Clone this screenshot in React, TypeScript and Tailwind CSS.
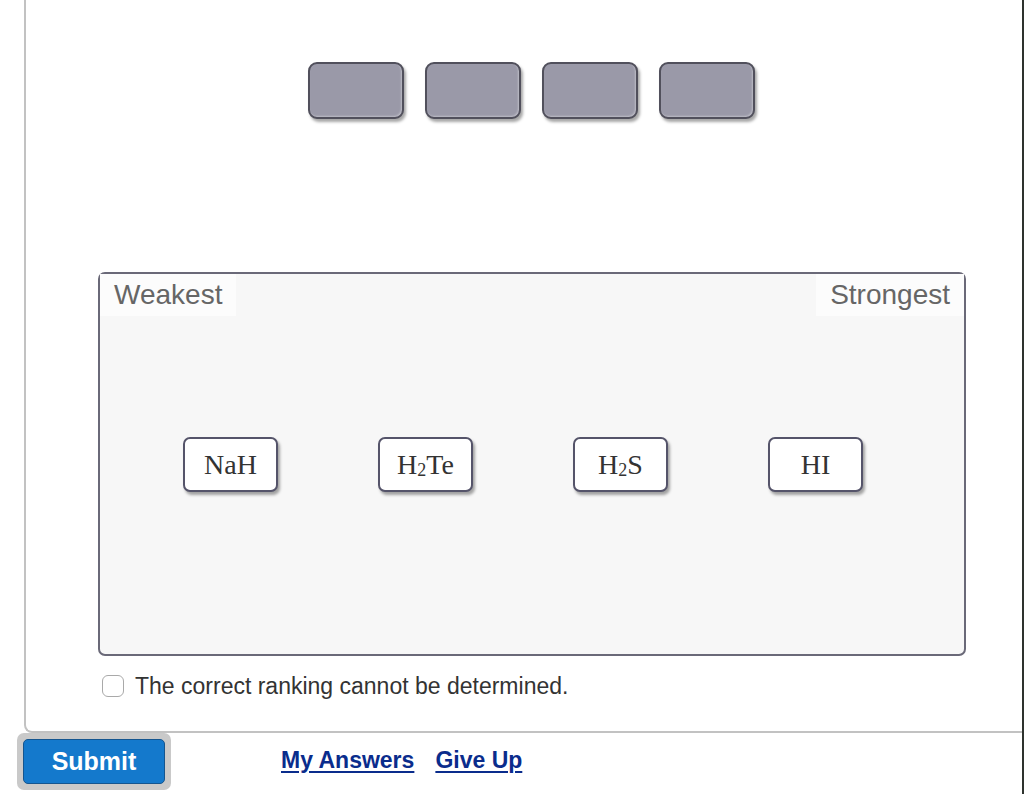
import React from 'react';

const Slot: React.FC = () => (
  <div className="w-[96px] h-[57px] rounded-[9px] border-[2.5px] border-[#51505c] bg-[#9a99a8] shadow-[2px_3px_3px_rgba(0,0,0,0.35),inset_-1px_-1px_2px_rgba(255,255,255,0.35)]" />
);

const Item: React.FC<{ children: React.ReactNode }> = ({ children }) => (
  <div
    className="w-[95px] h-[55px] rounded-[7px] border-[2.5px] border-[#55546a] bg-white flex items-center justify-center text-[28px] text-[#333] shadow-[2px_3px_3px_rgba(0,0,0,0.35)]"
    style={{ fontFamily: '"Liberation Serif", serif' }}
  >
    {children}
  </div>
);

const Sub: React.FC<{ children: React.ReactNode }> = ({ children }) => (
  <span className="text-[18px] relative top-[6px]">{children}</span>
);

export default function App() {
  return (
    <div
      className="w-[1024px] h-[794px] bg-white flex overflow-hidden"
      style={{ fontFamily: '"Liberation Sans", Arial, sans-serif' }}
    >
      <div className="flex-1 flex flex-col">
        <div className="ml-[24px] h-[733px] border-l-2 border-b-2 border-[#c2c2c2] rounded-bl-[8px] flex flex-col">
          <div className="ml-[71px] w-[868px] pt-[62px] flex justify-center gap-[21px]">
            <Slot />
            <Slot />
            <Slot />
            <Slot />
          </div>

          <div className="ml-[72px] mt-[153px] w-[868px] h-[384px] rounded-[7px] border-2 border-[#6a6978] bg-[#f7f7f7] flex flex-col">
            <div className="flex justify-between">
              <div className="h-[42px] px-[14px] bg-[#fcfcfc] text-[28px] text-[#666] leading-[42px]">Weakest</div>
              <div className="h-[42px] px-[14px] bg-[#fcfcfc] text-[28px] text-[#666] leading-[42px]">Strongest</div>
            </div>
            <div className="mt-[121px] pl-[83px] flex gap-[100px]">
              <Item>NaH</Item>
              <Item>
                H<Sub>2</Sub>Te
              </Item>
              <Item>
                H<Sub>2</Sub>S
              </Item>
              <Item>HI</Item>
            </div>
          </div>

          <label className="ml-[76px] mt-[13px] flex items-center gap-[11px]">
            <span className="w-[22px] h-[22px] rounded-[6px] border border-[#a9a9a9] bg-white" />
            <span className="text-[23px] text-[#333]">The correct ranking cannot be determined.</span>
          </label>
        </div>

        <div className="flex items-center">
          <div className="ml-[17px] w-[154px] h-[57px] rounded-[7px] bg-[#c9c9c9] p-[6px]">
            <button className="w-full h-full rounded-[5px] bg-[#1479cc] border border-[#14558f] text-white font-bold text-[25px]">
              Submit
            </button>
          </div>
          <a className="ml-[110px] mb-[3px] text-[23px] font-bold text-[#0a2c8c] underline underline-offset-[3px]">My Answers</a>
          <a className="ml-[21px] mb-[3px] text-[23px] font-bold text-[#0a2c8c] underline underline-offset-[3px]">Give Up</a>
        </div>
      </div>
      <div className="w-[2px] h-full bg-[#2e332e]" />
    </div>
  );
}
